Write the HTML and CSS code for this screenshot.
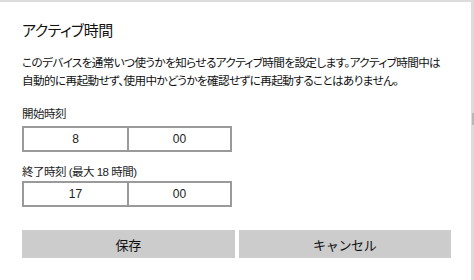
FILE: index.html
```html
<!DOCTYPE html>
<html lang="ja">
<head>
<meta charset="utf-8">
<title>アクティブ時間</title>
<link rel="stylesheet" href="styles.css">
</head>
<body>
<div class="dialog">
  <h1 class="title">アクティブ時間</h1>
  <p class="desc">このデバイスを通常いつ使うかを知らせるアクティブ時間を設定します。アクティブ時間中は自動的に再起動せず、使用中かどうかを確認せずに再起動することはありません。</p>
  <div class="field field-start">
    <div class="label">開始時刻</div>
    <div class="timebox">
      <div class="cell">8</div>
      <div class="cell">00</div>
    </div>
  </div>
  <div class="field field-end">
    <div class="label">終了時刻 (最大 18 時間)</div>
    <div class="timebox">
      <div class="cell">17</div>
      <div class="cell">00</div>
    </div>
  </div>
  <div class="buttons">
    <button class="btn">保存</button>
    <button class="btn">キャンセル</button>
  </div>
  <div class="scroll-thumb"></div>
</div>
</body>
</html>
```

FILE: styles.css
```css
html, body {
  margin: 0;
  padding: 0;
  background: #ffffff;
}
body {
  font-family: "Liberation Sans", "Noto Sans CJK JP", sans-serif;
  color: #111;
  font-feature-settings: "palt";
}
.dialog {
  position: relative;
  box-sizing: border-box;
  width: 474px;
  height: 280px;
  border-top: 2px solid #dcdcdc;
  border-right: 3px solid #dcdcdc;
  padding: 17px 20px 0 22px;
  background: #fff;
}
.title {
  margin: 0;
  font-size: 15px;
  letter-spacing: -0.5px;
  font-weight: normal;
  line-height: 24px;
  color: #111;
}
.desc {
  margin: 11px 0 0 0;
  font-size: 11.6px;
  letter-spacing: -0.6px;
  line-height: 18px;
  color: #111;
}
.field-start {
  margin-top: 16px;
}
.field-end {
  margin-top: 12px;
}
.label {
  font-size: 11.5px;
  letter-spacing: -0.5px;
  line-height: 16px;
  color: #222;
}
.timebox {
  width: 210px;
  box-sizing: border-box;
  height: 26px;
  border: 2px solid #9a9a9a;
  display: grid;
  grid-template-columns: 1fr 1fr;
}
.field-start .timebox {
  margin-top: 4px;
}
.field-end .timebox {
  margin-top: 1px;
}
.cell {
  display: flex;
  align-items: center;
  justify-content: center;
  font-size: 12px;
  color: #222;
}
.cell + .cell {
  border-left: 2px solid #9a9a9a;
}
.buttons {
  margin-top: 23px;
  display: grid;
  grid-template-columns: 1fr 1fr;
  gap: 4px;
}
.btn {
  height: 28px;
  border: none;
  background: #cccccc;
  font-family: inherit;
  font-size: 13px;
  letter-spacing: -0.3px;
  color: #111;
  padding: 0;
}
.scroll-thumb {
  position: absolute;
  right: -3px;
  top: 111px;
  width: 2px;
  height: 12px;
  background: #b8b8b8;
}
```
